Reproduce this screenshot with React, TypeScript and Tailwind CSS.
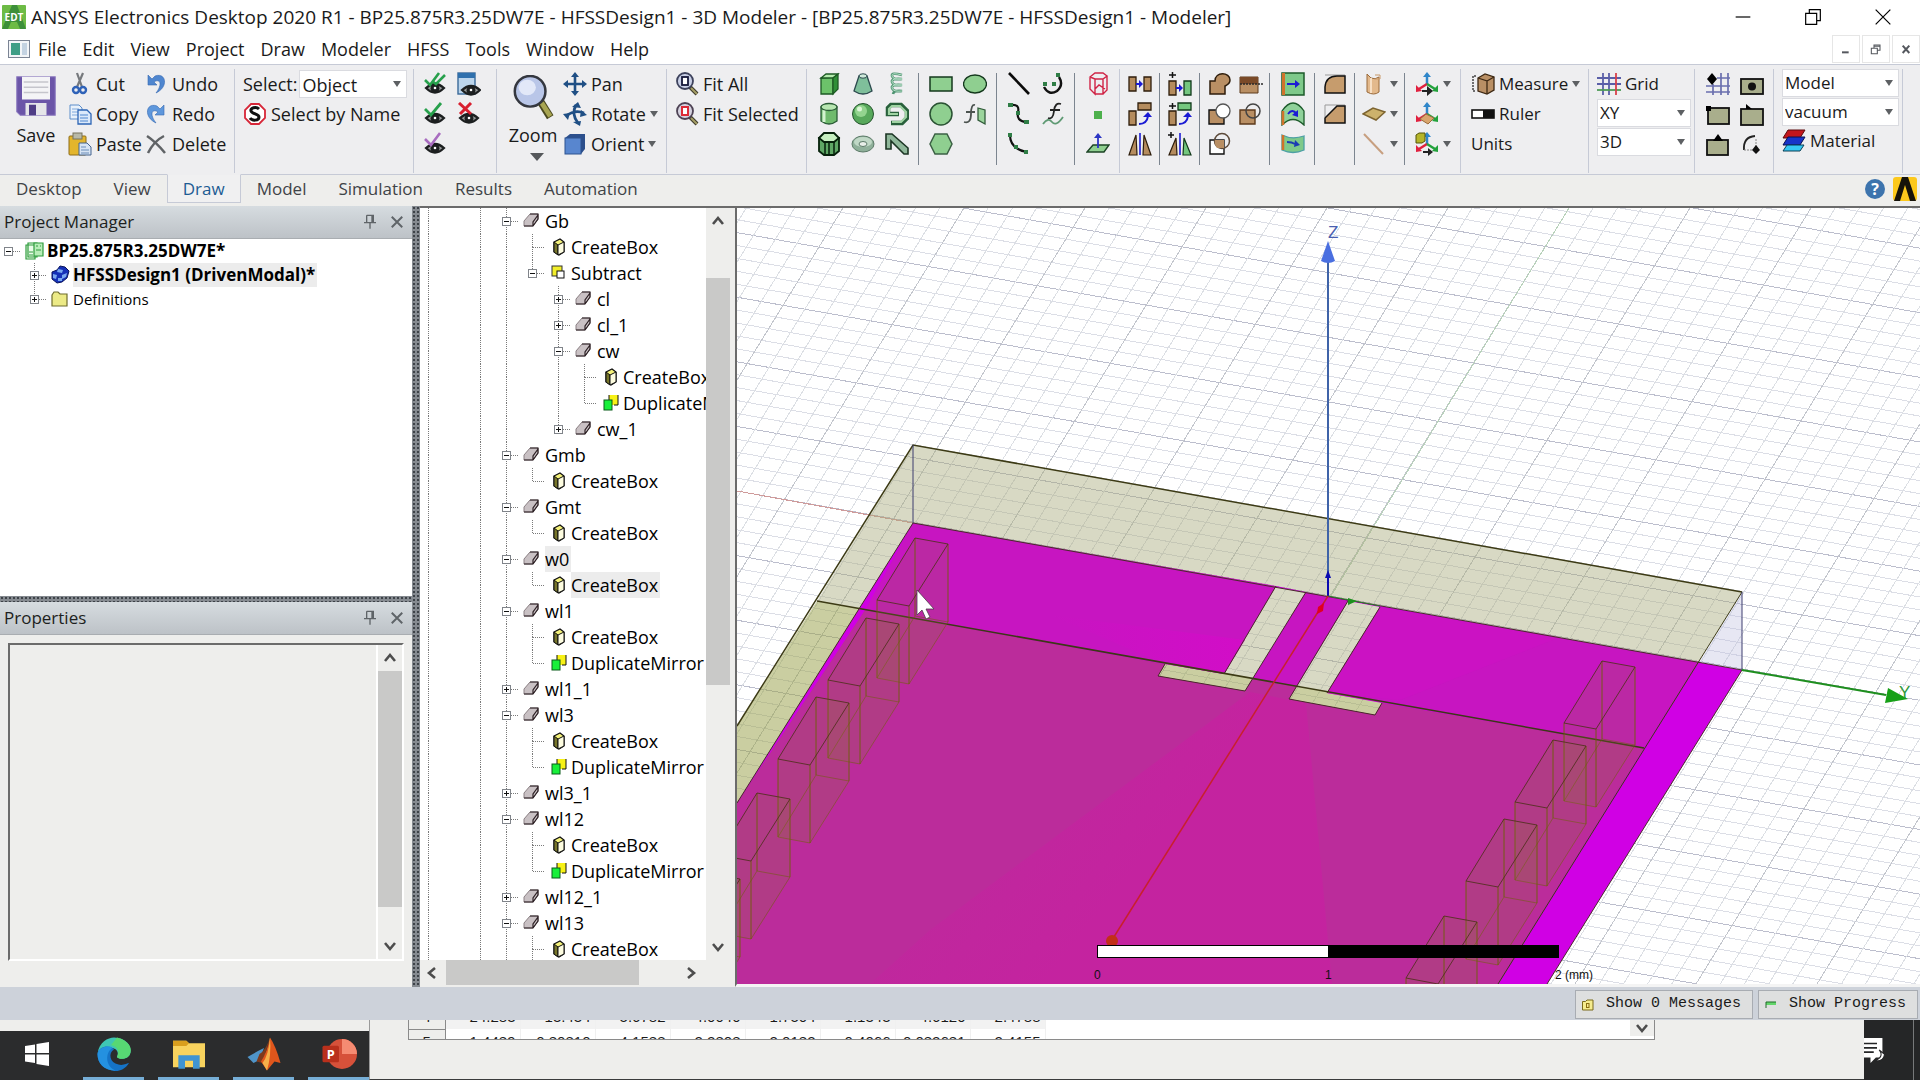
import type { ReactNode } from 'react';
import clsx from 'clsx';

/* ---------- icons ---------- */

function Svg({ children, className = 'size-6' }: { children: ReactNode; className?: string }) {
  return (
    <svg viewBox="0 0 24 24" className={clsx('shrink-0', className)} fill="none" aria-hidden="true">
      {children}
    </svg>
  );
}

const eye = (
  <>
    <path d="M3 16Q12 8 21 16Q12 25 3 16Z" fill="#9a9d9d" stroke="#1c1f20" strokeWidth="2.200" />
    <circle cx="12" cy="16.500" r="4.500" fill="#1c1f20" />
    <circle cx="12" cy="16" r="1.300" fill="#fff" />
  </>
);

const axes = (
  <>
    <path d="M12 13V3" stroke="#2f86c9" strokeWidth="2.500" />
    <path d="M8 5l4-5 4 5z" fill="#2f86c9" />
    <path d="M12 12L4 17" stroke="#e0203f" strokeWidth="2.500" />
    <path d="M1 13v7l6-1z" fill="#e0203f" />
    <path d="M12 12l8 5" stroke="#23a23c" strokeWidth="2.500" />
    <path d="M23 13v7l-6-1z" fill="#23a23c" />
  </>
);

const icons: Record<string, ReactNode> = {
  cut: (
    <>
      <path d="M9 1l5 14M15 1L9 15" stroke="#76797d" strokeWidth="2.200" />
      <circle cx="8" cy="18" r="3" stroke="#2f62b8" strokeWidth="2.400" />
      <circle cx="15" cy="18" r="3" stroke="#2f62b8" strokeWidth="2.400" />
    </>
  ),
  copy: (
    <>
      <path d="M2 3h9l3 3v11H2z" fill="#e8f1fb" stroke="#5c8ecb" />
      <path d="M4 7h7M4 10h7M4 13h7" stroke="#7fa8dc" />
      <path d="M10 8h9l4 4v10H10z" fill="#dbe9fa" stroke="#2e66b5" strokeWidth="1.300" />
      <path d="M12 13h8M12 16h8M12 19h8" stroke="#4f87cf" />
    </>
  ),
  paste: (
    <>
      <rect x="1" y="4" width="17" height="19" rx="1" fill="#e3b52c" stroke="#8d6d1a" />
      <rect x="5" y="1" width="9" height="6" fill="#b8b9a8" stroke="#77735c" />
      <path d="M11 11h8l4 4v8H11z" fill="#d7e4f3" stroke="#44648f" />
      <path d="M13 15h5M13 18h8M13 21h8" stroke="#6a8db9" />
    </>
  ),
  undo: <path d="M4 3v10h9l-3-3c6-4 9 2 2 11 13-6 10-21-1-17L8 7z" fill="#4f86cf" stroke="#3769b1" strokeWidth=".6" />,
  redo: <path d="M20 3v10h-9l3-3c-6-4-9 2-2 11C-1 15 2 0 13 4l3 3z" fill="#5e97dc" stroke="#3769b1" strokeWidth=".6" />,
  del: <path d="M3 4q9 6 18 17M20 4Q10 9 4 21" stroke="#606366" strokeWidth="2.500" />,
  stop: (
    <>
      <path d="M8 2h8l6 6v8l-6 6H8l-6-6V8z" fill="#fff" stroke="#d72638" strokeWidth="1.800" />
      <path d="M16 7c-3-3-9-1-8 2 1 3 8 3 8 6 0 4-7 4-9 1" stroke="#111" strokeWidth="3" />
    </>
  ),
  eyeAll: (
    <>
      {eye}
      <path d="M2 8l5 5L16 1M9 9l4 3 9-9" stroke="#27a04c" strokeWidth="2.600" />
    </>
  ),
  eyeOn: (
    <>
      {eye}
      <path d="M2 7l6 6L18 1" stroke="#27a04c" strokeWidth="2.800" />
    </>
  ),
  eyeSoft: (
    <>
      {eye}
      <path d="M2 7l6 6L17 1" stroke="#a86cc0" strokeWidth="2.600" />
    </>
  ),
  eyeWin: (
    <>
      <rect x="1" y="1" width="17" height="21" fill="#bcd5ec" stroke="#3b6a99" strokeWidth="1.400" />
      <path d="M1 3.500h17" stroke="#2f70ad" strokeWidth="5" />
      <g transform="translate(2 2)">{eye}</g>
    </>
  ),
  eyeOff: (
    <>
      {eye}
      <path d="M2 1l12 11M14 1L3 12" stroke="#d81f2f" strokeWidth="3" />
    </>
  ),
  pan: (
    <>
      <path d="M12 4v16M4 12h16" stroke="#1f4f85" strokeWidth="2.600" />
      <path d="M12 0l4 5H8zM12 24l4-5H8zM0 12l5-4v8zM24 12l-5-4v8z" fill="#1f4f85" />
    </>
  ),
  rotate: (
    <>
      <path d="M13 3Q8 12 15 21M3 14q9-7 18-3" stroke="#1f4f85" strokeWidth="2.800" />
      <path d="M9 5l6-5 3 6zM10 20l8-1-1 5zM0 12l7-1-2 7zM24 13l-6-5-1 7z" fill="#1f4f85" />
    </>
  ),
  orient: (
    <>
      <path d="M2 6l5-4h15v15l-4 5H2z" fill="#2c4f8c" />
      <rect x="2" y="6" width="16" height="16" fill="#5886cf" stroke="#2d528f" />
    </>
  ),
  fitAll: (
    <>
      <path d="M15 15l7 7" stroke="#3d3a2b" strokeWidth="4" />
      <path d="M16 16l6 6" stroke="#a59e66" strokeWidth="2" />
      <circle cx="10" cy="9" r="8" fill="#c9d0e6" stroke="#3d425c" strokeWidth="1.800" />
      <rect x="7" y="5" width="6" height="8" fill="#fff" stroke="#15183a" strokeWidth="1.800" />
    </>
  ),
  fitSel: (
    <>
      <path d="M15 15l7 7" stroke="#3d3a2b" strokeWidth="4" />
      <path d="M16 16l6 6" stroke="#a59e66" strokeWidth="2" />
      <circle cx="10" cy="9" r="8" fill="#d6d3e0" stroke="#4d4254" strokeWidth="1.800" />
      <rect x="7" y="5" width="6" height="8" fill="#fff" stroke="#dc2b38" strokeWidth="2" />
    </>
  ),
  box: (
    <>
      <path d="M4 6l12-1v17l-12 0z" fill="#6cc36a" stroke="#1d5a24" strokeWidth="1.300" />
      <path d="M4 6l5-4h12l-5 4z" fill="#b5ecae" stroke="#1d5a24" strokeWidth="1.300" />
      <path d="M16 6l5-4v15l-5 5z" fill="#2f8f37" stroke="#1d5a24" strokeWidth="1.300" />
    </>
  ),
  cone: (
    <>
      <path d="M8 4L3 19q9 6 18 0L16 4z" fill="#7fbf9b" stroke="#2c4a4e" strokeWidth="1.300" />
      <ellipse cx="12" cy="4" rx="4" ry="2.200" fill="#cfeadb" stroke="#2c4a4e" />
    </>
  ),
  helix: (
    <>
      <path d="M17 3Q6 0 7 4t10 3Q6 6 7 10t10 3Q6 12 7 16t10 3Q9 18 8 22" stroke="#4f9472" strokeWidth="2.600" />
      <path d="M17 3Q6 0 7 4t10 3Q6 6 7 10t10 3Q6 12 7 16t10 3" stroke="#b5dfc6" strokeWidth="1" />
    </>
  ),
  cyl: (
    <>
      <path d="M4 5v14q8 6 16 0V5z" fill="#6fba6d" stroke="#2a5c36" strokeWidth="1.300" />
      <path d="M7 8v12" stroke="#d2f3cf" strokeWidth="3" />
      <ellipse cx="12" cy="5" rx="8" ry="3.500" fill="#b7e6b1" stroke="#2a5c36" strokeWidth="1.300" />
    </>
  ),
  sphere: (
    <>
      <circle cx="12" cy="12" r="10.500" fill="#57a85b" stroke="#24532d" />
      <circle cx="10" cy="9" r="6" fill="#93d48f" />
      <circle cx="8.500" cy="7" r="2.500" fill="#ddf7d8" />
    </>
  ),
  spiral: (
    <>
      <path d="M14 12H3V6l3-3h10l6 6v7l-5 5H6" stroke="#28603b" strokeWidth="4.500" />
      <path d="M13 12H4V7l3-3h8l6 6v5l-5 5H7" stroke="#9fd3a3" strokeWidth="2.200" />
    </>
  ),
  prism: (
    <>
      <path d="M2 6v13l5 4h10l5-4V6z" fill="#5fa765" stroke="#06210b" strokeWidth="1.800" />
      <path d="M2 6l5-5h10l5 5-5 4H7z" fill="#c6efc0" stroke="#06210b" strokeWidth="1.800" />
      <path d="M8 10v13M12 10v13M17 10v13" stroke="#06210b" strokeWidth="1.500" />
    </>
  ),
  torus: (
    <>
      <ellipse cx="12" cy="12" rx="11" ry="8" fill="#8fb09a" stroke="#5c7a68" />
      <ellipse cx="12" cy="10" rx="9" ry="5" fill="#c0d8c6" />
      <ellipse cx="12" cy="12" rx="4" ry="2.500" fill="#e9efe9" stroke="#5c7a68" />
    </>
  ),
  sweep: <path d="M1 17V2h6l16 14v6h-4L6 9v8z" fill="#8fb79a" stroke="#1c3524" strokeWidth="1.600" />,
  rect: <rect x="1" y="5" width="22" height="14" fill="#8fcf90" stroke="#14381d" strokeWidth="1.500" />,
  ell: <ellipse cx="12" cy="12" rx="11.500" ry="9" fill="#8fcf90" stroke="#14381d" strokeWidth="1.300" />,
  circ: <circle cx="12" cy="12" r="11" fill="#8fcf90" stroke="#2a5233" strokeWidth="1.500" />,
  hex: <path d="M6 2h12l5 10-5 10H6L1 12z" fill="#8fcf90" stroke="#3c6145" strokeWidth="1.500" />,
  fsurf: (
    <>
      <path d="M12 3Q8 2 8 12t-7 8M3 10h9" stroke="#4c5350" strokeWidth="1.800" />
      <path d="M15 6l7 2v14l-7-4z" fill="#9bd49c" stroke="#315b3a" strokeWidth="1.300" />
    </>
  ),
  line: <path d="M2 1l20 21" stroke="#0a0a0a" strokeWidth="2.600" />,
  arc3: (
    <>
      <path d="M18 5q5 8-2 14Q8 24 3 15" stroke="#111" strokeWidth="2.400" />
      <path d="M15 1h4v4h-4zM2 10h4v4H2zM11 10h4v4h-4z" fill="#2f7d46" />
    </>
  ),
  spline: (
    <>
      <path d="M4 3q9-1 7 7-2 9 8 10" stroke="#111" strokeWidth="2.200" />
      <path d="M1 1h5v4H1zM9 9h4v4H9zM17 18h5v4h-5z" fill="#2f7d46" />
    </>
  ),
  eqcurve: (
    <>
      <path d="M20 2q-6-2-7 7t-6 7M9 8h10" stroke="#222" strokeWidth="1.800" />
      <path d="M2 22q5-7 9-2t11-5" stroke="#5f9a74" strokeWidth="1.800" />
    </>
  ),
  arc: (
    <>
      <path d="M3 3q0 14 17 17" stroke="#111" strokeWidth="2.200" />
      <path d="M1 1h4v4H1zM7 13h4v4H7zM17 18h4v4h-4z" fill="#2f7d46" />
    </>
  ),
  airbox: <path d="M4 5l5-4h8l4 3-4 3H9zM4 5v12l5 5V7M9 22h8V7M17 22l4-4V4M9 17l4-4 6 4" stroke="#d02446" strokeWidth="1.400" />,
  point: <rect x="8" y="9" width="8" height="8" fill="#4db04c" />,
  plane: (
    <>
      <path d="M1 20l6-7h16l-5 7z" fill="#8fcf90" stroke="#1c4425" strokeWidth="1.400" />
      <path d="M12 16V5" stroke="#2b35c4" strokeWidth="1.800" />
      <path d="M8 6l4-5 4 5z" fill="#2b35c4" />
    </>
  ),
  move: (
    <>
      <path d="M1 5h7v14H1zM16 5h7v14h-7z" fill="#b58c5e" stroke="#2e1d0b" strokeWidth="1.300" />
      <path d="M8 12h5" stroke="#1b1bd4" strokeWidth="2" />
      <path d="M11 8l4 4-4 4z" fill="#1b1bd4" />
    </>
  ),
  turn: (
    <>
      <path d="M1 9h7v14H1zM10 1h13v7H10z" fill="#b58c5e" stroke="#2e1d0b" strokeWidth="1.300" />
      <path d="M11 22q8 0 9-8" stroke="#1b1bd4" strokeWidth="2" />
      <path d="M15 15l5-5 4 5z" fill="#1b1bd4" />
    </>
  ),
  mirror: (
    <>
      <path d="M8 3L1 23h8zM16 3l7 20h-8z" fill="#b58c5e" stroke="#2e1d0b" strokeWidth="1.200" />
      <path d="M12 1v22" stroke="#1b1bd4" strokeWidth="1.600" />
    </>
  ),
  moveDup: (
    <>
      <path d="M1 9h7v14H1z" fill="#b58c5e" stroke="#2e1d0b" strokeWidth="1.300" />
      <path d="M16 9h7v14h-7z" fill="#74c77f" stroke="#123a1b" strokeWidth="1.300" />
      <path d="M1 3h7M4.500 0v6" stroke="#111" strokeWidth="1.500" />
      <path d="M8 16h5" stroke="#1b1bd4" strokeWidth="2" />
      <path d="M11 12l4 4-4 4z" fill="#1b1bd4" />
    </>
  ),
  turnDup: (
    <>
      <path d="M1 9h7v14H1z" fill="#b58c5e" stroke="#2e1d0b" strokeWidth="1.300" />
      <path d="M10 1h13v7H10z" fill="#74c77f" stroke="#123a1b" strokeWidth="1.300" />
      <path d="M1 4h7M4.500 1v6" stroke="#111" strokeWidth="1.500" />
      <path d="M11 22q8 0 9-8" stroke="#1b1bd4" strokeWidth="2" />
      <path d="M15 15l5-5 4 5z" fill="#1b1bd4" />
    </>
  ),
  mirrorDup: (
    <>
      <path d="M8 6L1 23h8z" fill="#b58c5e" stroke="#2e1d0b" strokeWidth="1.200" />
      <path d="M16 6l7 17h-8z" fill="#74c77f" stroke="#123a1b" strokeWidth="1.200" />
      <path d="M0 3h6M3 0v6" stroke="#111" strokeWidth="1.500" />
      <path d="M12 1v22" stroke="#1b1bd4" strokeWidth="1.600" />
    </>
  ),
  unite: <path d="M2 9h5c0-10 15-9 15-1 0 4-3 5-5 6v8H2z" fill="#b98f64" stroke="#2e1d0b" strokeWidth="1.500" />,
  split: (
    <>
      <path d="M1 5h18v16H1z" fill="#b98f64" stroke="#5c3a1c" />
      <path d="M1 5h18v7H1z" fill="#7a4a28" />
      <path d="M1 12h23" stroke="#2a2a2a" strokeWidth="1.500" strokeDasharray="2 1" />
    </>
  ),
  subtract: (
    <>
      <path d="M1 8h15v14H1z" fill="#b98f64" stroke="#111" strokeWidth="1.400" />
      <circle cx="15" cy="9" r="7" fill="#fff" stroke="#555" strokeWidth="1.300" />
    </>
  ),
  imprint: (
    <>
      <path d="M1 8h15v14H1z" fill="#b98f64" stroke="#5c3a1c" strokeWidth="1.400" />
      <circle cx="14" cy="9" r="7" stroke="#444" strokeWidth="1.500" />
    </>
  ),
  intersect: (
    <>
      <path d="M2 8h14v14H2z" fill="#fff" stroke="#111" strokeWidth="1.400" />
      <circle cx="14" cy="9" r="7.500" stroke="#5c4a3a" strokeWidth="1.500" />
      <path d="M7 8h9v8H9q-3-4-2-8z" fill="#b98f64" />
    </>
  ),
  sweepV: (
    <>
      <rect x="1" y="1" width="22" height="22" fill="#7ec98a" stroke="#1c5a2a" strokeWidth="1.500" />
      <path d="M2.500 1v22" stroke="#d0722a" strokeWidth="3" />
      <path d="M6 12h10" stroke="#1b1bd4" strokeWidth="2" />
      <path d="M14 8l5 4-5 4z" fill="#1b1bd4" />
    </>
  ),
  sweepA: (
    <>
      <path d="M1 23V9Q12-7 23 9v14Q12 12 1 23z" fill="#8fd19a" stroke="#1c5a2a" strokeWidth="1.300" />
      <path d="M2 23V9" stroke="#d0722a" strokeWidth="2.500" />
      <path d="M7 12q4-6 9 0" stroke="#1b1bd4" strokeWidth="1.800" />
      <path d="M17 8v7l-6-2z" fill="#1b1bd4" />
    </>
  ),
  sweepP: (
    <>
      <path d="M1 3q10 5 22 1v14q-11 5-22 0z" fill="#7ec98a" stroke="#4d9fa5" strokeWidth="1.300" />
      <path d="M2 3v15" stroke="#d0722a" strokeWidth="2.500" />
      <path d="M6 10q5 0 8 2" stroke="#1b3bb4" strokeWidth="1.800" />
      <path d="M14 8l5 5-6 2z" fill="#1b3bb4" />
    </>
  ),
  fillet: (
    <>
      <path d="M2 3h20" stroke="#999" />
      <path d="M2 21V15Q3 4 14 4h8v17z" fill="#c69c6d" stroke="#111" strokeWidth="1.500" />
    </>
  ),
  chamfer: (
    <>
      <path d="M2 3h20M2 3v12" stroke="#999" />
      <path d="M2 21v-5L14 4h8v17z" fill="#c69c6d" stroke="#111" strokeWidth="1.500" />
    </>
  ),
  sheetCyl: (
    <>
      <path d="M5 2v18q7 4 12 0V5q-4 3-8 1z" fill="#e3b98c" stroke="#9a6a3b" />
      <path d="M9 6v15" stroke="#f7dfc4" strokeWidth="2" />
      <path d="M13 3h5v4h-5" stroke="#c99a6b" />
    </>
  ),
  sheet: <path d="M1 12l10-6 12 4-9 8z" fill="#cdb26c" stroke="#7d6430" strokeWidth="1.500" />,
  edge: <path d="M2 2l19 20" stroke="#c79f80" strokeWidth="2" />,
  cs: (
    <>
      {axes}
      <path d="M7 18h5v-4l6 5-6 5v-4H7z" fill="#222" />
    </>
  ),
  csFace: (
    <>
      {axes}
      <path d="M5 17l6-5 8 4-6 6z" fill="#d9a56d" stroke="#9a6a3b" />
    </>
  ),
  csObj: (
    <>
      {axes}
      <path d="M1 3l3-2h6v8l-3 2H1z" fill="#b5b52a" stroke="#55550a" />
      <path d="M8 19h5v-3l5 4-5 4v-3H8z" fill="#222" />
    </>
  ),
  measure: (
    <>
      <path d="M7 6l7-4 9 3v13l-7 4-9-3z" fill="#b98f64" stroke="#3d2813" strokeWidth="1.300" />
      <path d="M7 6l9 3v13M16 9l7-4" stroke="#3d2813" strokeWidth="1.300" />
      <path d="M5 4H2v15h3" stroke="#444" strokeWidth="1.500" strokeDasharray="2 1" />
    </>
  ),
  ruler: (
    <>
      <rect x="1" y="8" width="22" height="8" fill="#fff" stroke="#111" strokeWidth="1.600" />
      <path d="M12 8h11v8H12z" fill="#111" />
    </>
  ),
  grid: (
    <>
      <path d="M6 1v22M12 1v22M0 6h24M0 12h24" stroke="#5a5fa8" strokeWidth="1.800" />
      <path d="M0 18h24" stroke="#4d9b57" strokeWidth="1.800" />
      <path d="M19 1v22" stroke="#d8404a" strokeWidth="1.800" />
    </>
  ),
  snapGrid: (
    <>
      <path d="M7 12v11M15 1v22M22 1v22M11 6h13M0 14h24M0 20h24" stroke="#6a6fae" strokeWidth="1.700" />
      <path d="M6 1l5 6-5 6-5-6z" fill="#000" />
    </>
  ),
  snapVertex: (
    <>
      <rect x="2" y="6" width="21" height="16" fill="#a9ae8c" stroke="#111" strokeWidth="1.800" />
      <rect x="0" y="4" width="5" height="5" fill="#000" />
    </>
  ),
  snapEdge: (
    <>
      <rect x="1" y="8" width="21" height="15" fill="#a9ae8c" stroke="#111" strokeWidth="1.800" />
      <path d="M12 2l5 7H7z" fill="#000" />
    </>
  ),
  snapFace: (
    <>
      <rect x="1" y="7" width="22" height="15" fill="#a9ae8c" stroke="#111" strokeWidth="1.800" />
      <circle cx="12" cy="14.500" r="4" fill="#111" />
    </>
  ),
  snapMid: (
    <>
      <rect x="1" y="7" width="22" height="16" fill="#a9ae8c" stroke="#111" strokeWidth="1.800" />
      <path d="M6 2l6 5H6z" fill="#000" />
    </>
  ),
  snapArc: (
    <>
      <path d="M4 18Q3 5 15 4" stroke="#222" strokeWidth="1.800" />
      <path d="M4 18h12V6" stroke="#888" strokeDasharray="2 1" />
      <path d="M16 13l4 5-4 4-4-4z" fill="#111" />
    </>
  ),
  material: (
    <>
      <path d="M6 1h17l-5 8H1z" fill="#c4161c" stroke="#5c0a0c" />
      <path d="M6 8h17l-5 8H1z" fill="#1734c9" stroke="#08104f" />
      <path d="M5 16h17l-4 6H1z" fill="#36c8f4" stroke="#0a3f55" />
    </>
  ),
};

function Icon({ name, className }: { name: string; className?: string }) {
  return <Svg className={className}>{icons[name]}</Svg>;
}

function Caret() {
  return (
    <svg viewBox="0 0 8 6" className="h-[6px] w-2 shrink-0" aria-hidden="true">
      <path d="M0 0h8L4 6z" fill="#5d6063" />
    </svg>
  );
}

/* ---------- ribbon ---------- */

function Group({ className, dark, children }: { className: string; dark?: boolean; children?: ReactNode }) {
  return (
    <div className={clsx('relative flex h-[104px] shrink-0 items-start', className)}>
      {children}
      <span
        className={clsx('absolute right-0 w-px', dark ? 'top-1 bottom-2 bg-[#7c8590]' : 'inset-y-0 bg-[#c6cad6]')}
      />
    </div>
  );
}

function Tool({ icon, label, caret }: { icon: string; label: string; caret?: boolean }) {
  return (
    <button className="flex h-[30px] items-center gap-1 whitespace-nowrap">
      <Icon name={icon} />
      <span>{label}</span>
      {caret && <Caret />}
    </button>
  );
}

function IconGrid({ cols, cell = 'w-[34px]', caret }: { cols: string[][]; cell?: string; caret?: boolean[] }) {
  return (
    <div className="flex">
      {cols.map((col, i) => (
        <div key={i} className="flex flex-col">
          {col.map((name, j) => (
            <button key={name} aria-label={name} className={clsx('flex h-[30px] items-center justify-center gap-1', cell)}>
              <Icon name={name} />
              {caret && (caret[j] ? <Caret /> : <span className="w-2" />)}
            </button>
          ))}
        </div>
      ))}
    </div>
  );
}

function Combo({ label, value, options, className }: { label: string; value: string; options: string[]; className: string }) {
  return (
    <div className={clsx('relative flex h-7 items-center border border-[#dadbe0] bg-white', className)}>
      <select aria-label={label} defaultValue={value} className="size-full appearance-none bg-transparent pl-0.5">
        {options.map((o) => (
          <option key={o}>{o}</option>
        ))}
      </select>
      <span className="pointer-events-none absolute right-[5px] flex">
        <Caret />
      </span>
    </div>
  );
}

function Ribbon() {
  return (
    <div className="flex h-[111px] shrink-0 overflow-hidden border-y border-[#c6cad6] bg-[#eeeef0] pt-1 text-lg">
      <Group className="w-[235px] pl-3.5">
        <button className="flex w-11 flex-col items-center gap-2 pt-1.5">
          <Svg className="size-[42px]">
            <path d="M1 1h22v22H3l-2-2z" fill="#6b55a8" stroke="#8d7cc0" strokeWidth=".6" />
            <path d="M4 1h16v13H4z" fill="#f4f4f6" />
            <path d="M5 4h14M5 7h14M5 10h14" stroke="#c5c5cc" strokeWidth=".8" />
            <path d="M6 16h12v7H6z" fill="#e5e5e9" />
            <path d="M8 17h4v6H8z" fill="#4f3d86" />
          </Svg>
          <span className="leading-5">Save</span>
        </button>
        <div className="ml-2.5 flex w-[76px] flex-col">
          <Tool icon="cut" label="Cut" />
          <Tool icon="copy" label="Copy" />
          <Tool icon="paste" label="Paste" />
        </div>
        <div className="flex flex-col">
          <Tool icon="undo" label="Undo" />
          <Tool icon="redo" label="Redo" />
          <Tool icon="del" label="Delete" />
        </div>
      </Group>

      <Group className="w-[179px] flex-col pl-2">
        <div className="flex h-[30px] items-center gap-0.5">
          <span>Select:</span>
          <Combo label="Select" value="Object" options={['Object', 'Face', 'Edge', 'Vertex']} className="w-[108px]" />
        </div>
        <Tool icon="stop" label="Select by Name" />
      </Group>

      <Group className="w-[83px] pl-1">
        <IconGrid cols={[['eyeAll', 'eyeOn', 'eyeSoft'], ['eyeWin', 'eyeOff']]} />
      </Group>

      <Group className="w-[170px] pl-2.5">
        <button className="flex w-[52px] flex-col items-center pt-1.5">
          <Svg className="size-[46px]">
            <path d="M16 14l5 8" stroke="#4a481f" strokeWidth="4" />
            <path d="M16.500 14.500l4.500 7" stroke="#a8a552" strokeWidth="2.500" />
            <ellipse cx="10.500" cy="8.500" rx="8" ry="8" fill="#b9c6e8" stroke="#34373f" strokeWidth="1.300" />
            <ellipse cx="9" cy="6.500" rx="4.500" ry="4" fill="#e2e8f8" />
          </Svg>
          <span className="mt-1 leading-5">Zoom</span>
          <svg viewBox="0 0 14 8" className="mt-2 ml-2 h-2 w-3.5" aria-hidden="true">
            <path d="M0 0h14L7 8z" fill="#55585b" />
          </svg>
        </button>
        <div className="ml-1 flex flex-col">
          <Tool icon="pan" label="Pan" />
          <Tool icon="rotate" label="Rotate" caret />
          <Tool icon="orient" label="Orient" caret />
        </div>
      </Group>

      <Group className="w-[140px] flex-col pl-2">
        <Tool icon="fitAll" label="Fit All" />
        <Tool icon="fitSel" label="Fit Selected" />
      </Group>

      <Group dark className="w-28 justify-center">
        <IconGrid cols={[['box', 'cyl', 'prism'], ['cone', 'sphere', 'torus'], ['helix', 'spiral', 'sweep']]} />
      </Group>
      <Group dark className="w-[78px] justify-center">
        <IconGrid cols={[['rect', 'circ', 'hex'], ['ell', 'fsurf']]} />
      </Group>
      <Group dark className="w-[78px] justify-center">
        <IconGrid cols={[['line', 'spline', 'arc'], ['arc3', 'eqcurve']]} />
      </Group>
      <Group className="w-[45px] justify-center">
        <IconGrid cols={[['airbox', 'point', 'plane']]} />
      </Group>
      <Group dark className="w-10 justify-center">
        <IconGrid cols={[['move', 'turn', 'mirror']]} />
      </Group>
      <Group dark className="w-10 justify-center">
        <IconGrid cols={[['moveDup', 'turnDup', 'mirrorDup']]} />
      </Group>
      <Group dark className="w-[70px] justify-center">
        <IconGrid cell="w-[31px]" cols={[['unite', 'subtract', 'intersect'], ['split', 'imprint']]} />
      </Group>
      <Group dark className="w-[45px] justify-center">
        <IconGrid cols={[['sweepV', 'sweepA', 'sweepP']]} />
      </Group>
      <Group dark className="w-10 justify-center">
        <IconGrid cols={[['fillet', 'chamfer']]} />
      </Group>
      <Group dark className="w-[50px] justify-center">
        <IconGrid cell="w-10" caret={[true, true, true]} cols={[['sheetCyl', 'sheet', 'edge']]} />
      </Group>
      <Group className="w-14 justify-center">
        <IconGrid cell="w-12" caret={[true, false, true]} cols={[['cs', 'csFace', 'csObj']]} />
      </Group>

      <Group className="w-32 flex-col pl-2.5 text-[17px]">
        <Tool icon="measure" label="Measure" caret />
        <Tool icon="ruler" label="Ruler" />
        <button className="h-[30px]">Units</button>
      </Group>
      <Group className="w-[106px] flex-col pl-2 text-[17px]">
        <Tool icon="grid" label="Grid" />
        <Combo label="Plane" value="XY" options={['XY', 'YZ', 'XZ']} className="w-[94px]" />
        <Combo label="Mode" value="3D" options={['3D', 'In plane']} className="mt-px w-[94px]" />
      </Group>
      <Group className="w-[79px] justify-center">
        <IconGrid cols={[['snapGrid', 'snapVertex', 'snapEdge'], ['snapFace', 'snapMid', 'snapArc']]} />
      </Group>
      <Group className="w-[129px] flex-col pl-2 text-[17px]">
        <Combo label="Object type" value="Model" options={['Model', 'Non Model']} className="w-[117px]" />
        <Combo label="Material name" value="vacuum" options={['vacuum', 'copper']} className="mt-px w-[117px]" />
        <Tool icon="material" label="Material" />
      </Group>
    </div>
  );
}

/* ---------- trees ---------- */

type Row = { g: string; icon: keyof typeof treeIcons; label: string; sel?: boolean; bold?: boolean };

const treeIcons = {
  solid: (
    <>
      <path d="M4 17v-5l6-7h8v5l-5 7z" fill="#c9c1c4" stroke="#8b8084" />
      <path d="M4 17h9l5-7V5h-8M13 17v-4l5-7" stroke="#2c2024" strokeWidth="1.200" />
    </>
  ),
  cube: (
    <>
      <path d="M8 7l6-3 4 3v10l-5 3-5-3z" fill="#f5f27a" stroke="#111" strokeWidth="1.300" />
      <path d="M8 7l4 3v10l-4-3z" fill="#77752a" stroke="#111" />
      <path d="M12 10l6-3v10l-6 3z" fill="#fdfce0" stroke="#111" />
    </>
  ),
  sub: (
    <>
      <rect x="6" y="5" width="10" height="10" fill="#f2ee2a" stroke="#333" />
      <rect x="11" y="10" width="7" height="7" fill="#fff" stroke="#111" />
    </>
  ),
  dup: (
    <>
      <rect x="11" y="4" width="9" height="10" fill="#f7f116" />
      <path d="M20 4v10h-4M11 9V4" stroke="#111" />
      <rect x="6" y="9" width="8" height="10" fill="#17f03a" stroke="#0b5a1a" />
    </>
  ),
  project: (
    <>
      <path d="M4 6h9v14H4zM6 4h9v14H6z" fill="#eafbe9" stroke="#2e9c3d" strokeWidth="1.200" />
      <path d="M12 4h9v13h-9z" fill="#b8edb8" stroke="#2e9c3d" strokeWidth="1.200" />
      <path d="M14 7h2M18 7h1M14 11h5M7 13h4M7 16h4" stroke="#2e9c3d" />
    </>
  ),
  design: (
    <>
      <path d="M4 9l5-2 3-4 5 1 4 4-2 7-5 4-5 1-5-4z" fill="#1530b8" stroke="#0a155c" />
      <path d="M10 6l5 1-1 3-5-1zM5 11l4 1-1 4-3-1zM14 12l5-2-1 4-4 2zM10 15h4v3h-4z" fill="#79a8f0" />
    </>
  ),
  folder: <path d="M4 8l2-3h4l2 2h7v12H4z" fill="#ecea86" stroke="#6f6d2e" strokeWidth="1.200" />,
};

// one guide column: | line, T branch, L last branch, -/+ node, m/p node without line below, n root node
function Guide({ kind, h }: { kind: string; h: number }) {
  const mid = h / 2;
  const node = '-+mpn'.includes(kind);
  const up = '|TL-+mp'.includes(kind);
  const down = '|T-+'.includes(kind);
  return (
    <svg width="26" height={h} className="shrink-0" fill="none" aria-hidden="true">
      <g stroke="#7a7a7a" strokeDasharray="1 1" shapeRendering="crispEdges">
        {up && <path d={`M13.500 0V${mid}`} />}
        {down && <path d={`M13.500 ${mid}V${h}`} />}
        {kind !== '|' && kind !== ' ' && <path d={`M14 ${mid + 0.5}H26`} />}
      </g>
      {node && (
        <g shapeRendering="crispEdges">
          <rect x="9.500" y={mid - 3.5} width="8" height="8" fill="#fff" stroke="#80848a" />
          <path d={`M11 ${mid + 0.5}h5`} stroke="#111" />
          {'+p'.includes(kind) && <path d={`M13.500 ${mid - 2}v5`} stroke="#111" />}
        </g>
      )}
    </svg>
  );
}

function Tree({ rows, h, className }: { rows: Row[]; h: number; className: string }) {
  return (
    <ul className="-ml-[5px]">
      {rows.map((r, i) => (
        <li key={i} className={clsx('flex items-center whitespace-nowrap', className)}>
          {r.g.split('').map((k, j) => (
            <Guide key={j} kind={k} h={h} />
          ))}
          <span className="flex w-[26px] shrink-0 justify-center">
            <Svg>{treeIcons[r.icon]}</Svg>
          </span>
          <span
            className={clsx('flex h-full items-center pr-0.5', r.sel && 'bg-[#ececec]', r.bold && 'text-[17px] font-bold')}
          >
            {r.label}
          </span>
        </li>
      ))}
    </ul>
  );
}

const projectRows: Row[] = [
  { g: 'n', icon: 'project', label: 'BP25.875R3.25DW7E*', bold: true },
  { g: ' +', icon: 'design', label: 'HFSSDesign1 (DrivenModal)*', sel: true, bold: true },
  { g: ' p', icon: 'folder', label: 'Definitions' },
];

const modelRows: Row[] = [
  { g: '| |-', icon: 'solid', label: 'Gb' },
  { g: '| ||T', icon: 'cube', label: 'CreateBox' },
  { g: '| ||m', icon: 'sub', label: 'Subtract' },
  { g: '| || +', icon: 'solid', label: 'cl' },
  { g: '| || +', icon: 'solid', label: 'cl_1' },
  { g: '| || -', icon: 'solid', label: 'cw' },
  { g: '| || |T', icon: 'cube', label: 'CreateBox' },
  { g: '| || |L', icon: 'dup', label: 'DuplicateMirror' },
  { g: '| || p', icon: 'solid', label: 'cw_1' },
  { g: '| |-', icon: 'solid', label: 'Gmb' },
  { g: '| ||L', icon: 'cube', label: 'CreateBox' },
  { g: '| |-', icon: 'solid', label: 'Gmt' },
  { g: '| ||L', icon: 'cube', label: 'CreateBox' },
  { g: '| |-', icon: 'solid', label: 'w0', sel: true },
  { g: '| ||L', icon: 'cube', label: 'CreateBox', sel: true },
  { g: '| |-', icon: 'solid', label: 'wl1' },
  { g: '| ||T', icon: 'cube', label: 'CreateBox' },
  { g: '| ||L', icon: 'dup', label: 'DuplicateMirror' },
  { g: '| |+', icon: 'solid', label: 'wl1_1' },
  { g: '| |-', icon: 'solid', label: 'wl3' },
  { g: '| ||T', icon: 'cube', label: 'CreateBox' },
  { g: '| ||L', icon: 'dup', label: 'DuplicateMirror' },
  { g: '| |+', icon: 'solid', label: 'wl3_1' },
  { g: '| |-', icon: 'solid', label: 'wl12' },
  { g: '| ||T', icon: 'cube', label: 'CreateBox' },
  { g: '| ||L', icon: 'dup', label: 'DuplicateMirror' },
  { g: '| |+', icon: 'solid', label: 'wl12_1' },
  { g: '| |-', icon: 'solid', label: 'wl13' },
  { g: '| ||T', icon: 'cube', label: 'CreateBox' },
];

function Chevron({ dir, className = 'h-[26px]' }: { dir: 'up' | 'down' | 'left' | 'right'; className?: string }) {
  const d = { up: 'M7 15l5-6 5 6', down: 'M7 9l5 6 5-6', left: 'M15 7l-6 5 6 5', right: 'M9 7l6 5-6 5' }[dir];
  return (
    <button aria-label={`Scroll ${dir}`} className={clsx('flex w-6 shrink-0 items-center justify-center', className)}>
      <Svg>
        <path d={d} stroke="#4d4d4d" strokeWidth="2.600" />
      </Svg>
    </button>
  );
}

function PanelHeader({ title }: { title: string }) {
  return (
    <div className="flex h-[33px] shrink-0 items-center border-b border-[#a9adb1] bg-linear-to-b from-[#d6dce0] to-[#bdc2c7] pr-1.5 pl-1 text-[17px] text-[#1d1f21]">
      <h2 className="flex-1">{title}</h2>
      <button aria-label={`Pin ${title}`} className="mr-2.5">
        <Svg className="size-4">
          <path d="M7 2h10v11M7 2v11M15 2v11M3 13h18M12 13v9" stroke="#5f6468" strokeWidth="2" />
        </Svg>
      </button>
      <button aria-label={`Close ${title}`}>
        <Svg className="size-[18px]">
          <path d="M5 5l14 14M19 5L5 19" stroke="#5f6468" strokeWidth="2.600" />
        </Svg>
      </button>
    </div>
  );
}

const hatch = 'bg-[#858a90] bg-[radial-gradient(#3d4248_1px,transparent_1px)] bg-[size:4px_4px]';

/* ---------- 3D viewport ---------- */

const seq = (from: number, to: number) => Array.from({ length: to - from + 1 }, (_, i) => from + i);

const vias = [
  [915, 538], [866, 618], [816, 697], [757, 793], [707, 873],
  [1602, 661], [1553, 740], [1504, 819], [1444, 916],
];

function Via({ x, y }: { x: number; y: number }) {
  const a = [x, y], b = [x + 33, y + 6], c = [x - 6, y + 68], d = [x - 38, y + 62];
  const low = (p: number[]) => `${p[0]} ${p[1] + 78}`;
  return (
    <g>
      <path d={`M${a}L${b}L${low(b)}L${low(c)}L${low(d)}L${d}Z`} fill="#8a7a30" fillOpacity=".2" />
      <g stroke="#6b6000" strokeOpacity=".85">
        <path d={`M${low(a)}L${low(b)}L${low(c)}L${low(d)}Z`} strokeOpacity=".5" />
        <path d={`M${a}L${low(a)}M${b}L${low(b)}M${c}L${low(c)}M${d}L${low(d)}`} />
        <path d={`M${a}L${b}L${c}L${d}Z`} stroke="#50301c" />
      </g>
    </g>
  );
}

function Viewport() {
  return (
    <svg
      viewBox="737 208 1183 776"
      preserveAspectRatio="xMinYMin slice"
      className="size-full bg-white"
      fill="none"
      role="img"
      aria-label="HFSS model"
      fontFamily="Liberation Sans, Arial, sans-serif"
    >
      <defs>
        <linearGradient id="glow" x1="0" y1="0" x2="1" y2=".5">
          <stop offset="0" stopColor="#c522a0" stopOpacity="0" />
          <stop offset=".3" stopColor="#c522a0" stopOpacity=".25" />
          <stop offset=".7" stopColor="#c522a0" stopOpacity=".9" />
        </linearGradient>
        <linearGradient id="glowTop" x1="0" y1="0" x2="1" y2="0">
          <stop offset="0" stopColor="#d30cc8" stopOpacity="0" />
          <stop offset="1" stopColor="#d30cc8" stopOpacity=".9" />
        </linearGradient>
      </defs>

      {/* reference grid */}
      <g shapeRendering="crispEdges">
        {seq(-40, 42).map((k) => {
          const y = 491 + k * 12.92;
          return <path key={k} d={`M737 ${y}L1920 ${y + 209.4}`} stroke={k % 5 === 0 ? '#bcbecd' : '#dcdee6'} />;
        })}
        {seq(-36, 36).map((k) => {
          const x = 1569 + k * 24.2;
          return <path key={k} d={`M${x} 208L${x - 478} 984`} stroke={k % 5 === 0 ? '#c3c6cd' : '#dcdfe4'} />;
        })}
        <path d="M737 491L913 523" stroke="#cf9a9a" />
        <path d="M1569 208L1331 596" stroke="#b9d2bb" />
      </g>

      {/* substrate, upper and lower part */}
      <path d="M913 445L1742 592L1644 748L817 601Z" fill="#a9ab7c" fillOpacity=".45" />
      <path d="M817 601L1644 748L1498 984H737V726Z" fill="#9aa24a" fillOpacity=".52" />
      <path d="M1742 592V670L1699 662Z" fill="#b9b9dc" fillOpacity=".35" />

      {/* ground plane */}
      <path
        fillRule="evenodd"
        d="M913 523L1742 670L1547 984H737V803ZM1276 586L1224 674L1165 664L1158 676L1245 691L1253 678L1306 592ZM1348 601L1297 686L1289 699L1375 715L1382 703L1327 693L1380 607Z"
        fill="#d000e4"
      />
      <path d="M913 523L1276 586L1224 674L865 610Z" fill="#c715c1" />
      <path d="M1306 592L1348 601L1297 686L1254 678Z" fill="#c715c1" />
      <path d="M1380 607L1699 662L1644 748L1327 693Z" fill="#c715c1" />
      <path d="M1050 615L1245 640L1224 674L1165 664Z" fill="url(#glowTop)" />
      <path d="M1380 607L1560 637L1400 700L1327 693Z" fill="#cf0fc5" fillOpacity=".5" />
      <path
        d="M865 610L1165 664L1158 676L1245 691L1253 678L1297 686L1289 699L1375 715L1382 703L1644 748L1498 984H737V803Z"
        fill="#bb2c9b"
      />
      <path d="M1250 692L1306 703L1332 984H870L930 930Z" fill="url(#glow)" />

      {/* edges */}
      <g stroke="#4a2a2a">
        <path d="M1276 586L1224 674M1306 592L1245 691L1158 676L1165 664M1348 601L1289 699L1375 715L1382 703M1380 607L1327 693" />
        <path d="M913 523L1742 670L1547 984M913 523L737 803" />
        <path d="M1742 592L1498 984" stroke="#3c3a14" />
      </g>
      <path d="M737 726L913 445L1742 592M817 601L1644 748" stroke="#3c3a14" strokeWidth="1.500" />
      <path d="M913 445V523M1742 592V670" stroke="#3d3d6e" />

      {vias.map(([x, y]) => (
        <Via key={`${x}-${y}`} x={x} y={y} />
      ))}

      {/* axes */}
      <path d="M1328 596V262" stroke="#3f63a8" strokeWidth="2" />
      <path d="M1328 241L1335 261Q1328 265 1321 261Z" fill="#4a6fe0" />
      <path d="M1328 596V574" stroke="#0b0bb0" strokeWidth="2" />
      <path d="M1328 570l3 8h-6z" fill="#0b0bb0" />
      <path d="M1328 596L1380 606" stroke="#2d7a2d" strokeWidth="1" />
      <path d="M1742 670L1886 695" stroke="#1e8f1e" strokeWidth="2" />
      <path d="M1348 598l9 3-9 4z" fill="#1e8f1e" />
      <path d="M1888 688L1908 699L1885 703Z" fill="#17a017" />
      <path d="M1328 596L1112 940" stroke="#c8202c" strokeWidth="1.500" />
      <path d="M1324 603l-1 8-6 3 1-7z" fill="#e00020" />
      <circle cx="1112" cy="941" r="6" fill="#c23018" />
      <text x="1328" y="238" fontSize="17" fill="#4a5fb0">Z</text>
      <text x="1899" y="698" fontSize="17" fill="#2f9a3a">Y</text>

      {/* scale */}
      <rect x="1097" y="945" width="462" height="13" fill="#000" />
      <rect x="1098" y="946" width="230" height="11" fill="#fff" />
      <g fontSize="12" fill="#111">
        <text x="1094" y="979">0</text>
        <text x="1325" y="979">1</text>
        <text x="1555" y="979">2 (mm)</text>
      </g>

      {/* pointer */}
      <path d="M917 590V615L922 610L926 619L930 617L926 609H934Z" fill="#fff" stroke="#4d3a4a" strokeWidth=".8" />
    </svg>
  );
}

/* ---------- window chrome ---------- */

const menus = ['File', 'Edit', 'View', 'Project', 'Draw', 'Modeler', 'HFSS', 'Tools', 'Window', 'Help'];
const tabs = ['Desktop', 'View', 'Draw', 'Model', 'Simulation', 'Results', 'Automation'];
const results = [
  ['4', '24.283', '13.434', '5.6782', '4.0040', '1.7504', '1.1343', '4.6120', '2.4788'],
  ['5', '1.4489', '0.80810', '4.1588', '2.2808', '2.0182', '0.4066', '0.082681', '2.4155'],
];

function TitleBar() {
  return (
    <header className="flex h-[33px] shrink-0 items-center bg-white pr-0.5 pl-0.5 text-[19px]">
      <svg viewBox="0 0 24 24" className="size-6 shrink-0" aria-hidden="true">
        <rect width="24" height="24" rx="1" fill="#6dbb45" />
        <path d="M0 24L10 0h5l9 24h-6l-3-7H9l-3 7z" fill="#3d8f3a" />
        <text x="12" y="16" textAnchor="middle" fontSize="10" fontWeight="700" fill="#fff" fontFamily="Open Sans, sans-serif">
          EDT
        </text>
      </svg>
      <h1 className="flex-1 truncate pl-[5px] leading-7">
        ANSYS Electronics Desktop 2020 R1 - BP25.875R3.25DW7E - HFSSDesign1 - 3D Modeler - [BP25.875R3.25DW7E - HFSSDesign1 - Modeler]
      </h1>
      <div className="flex text-black">
        {['M4 12h16', 'M4 8h12v12H4zM8 8V4h12v12h-4', 'M4 4l16 16M20 4L4 20'].map((d, i) => (
          <button key={d} aria-label={['Minimize', 'Restore', 'Close'][i]} className="flex w-[70px] justify-center">
            <Svg className="size-[22px]">
              <path d={d} stroke="currentColor" strokeWidth="1.300" />
            </Svg>
          </button>
        ))}
      </div>
    </header>
  );
}

function MenuBar() {
  return (
    <nav className="flex h-[31px] shrink-0 items-center bg-white pl-2 text-lg">
      <svg viewBox="0 0 22 18" className="mr-2 h-[18px] w-[22px] shrink-0" aria-hidden="true">
        <rect x=".5" y=".5" width="21" height="17" fill="#f3f5f8" stroke="#7b8494" />
        <rect x="3" y="3" width="9" height="12" fill="#3f9e86" />
        <rect x="14" y="3" width="5" height="12" fill="#c4d3e2" />
      </svg>
      <div className="flex flex-1 gap-4">
        {menus.map((m) => (
          <button key={m}>{m}</button>
        ))}
      </div>
      <div className="flex gap-0.5">
        {['M6 17h10', 'M5 11h9v8H5zM9 11V6h9v8h-4M9 8h9', 'M7 7l10 11M17 7L7 18'].map((d, i) => (
          <button
            key={d}
            aria-label={['Minimize document', 'Restore document', 'Close document'][i]}
            className="flex h-7 w-7 items-center justify-center border border-[#e6e6e6]"
          >
            <Svg className="size-4">
              <path d={d} stroke="#55585e" strokeWidth={i === 1 ? 1.6 : 3} />
            </Svg>
          </button>
        ))}
      </div>
    </nav>
  );
}

function TabBar() {
  return (
    <div className="flex h-[31px] shrink-0 items-start bg-[#eeeeec] text-[17px] text-[#3f4347]">
      {tabs.map((t) => (
        <button
          key={t}
          className={clsx(
            'relative -mt-px flex h-[29px] items-center border px-[15px]',
            t === 'Draw' ? 'border-[#c6cad6] border-t-[#eeeef0] bg-[#f0f0f1] text-[#1d5c93]' : 'border-transparent',
          )}
        >
          {t}
        </button>
      ))}
      <div className="ml-auto flex h-7 items-center gap-2 pr-[3px]">
        <button
          aria-label="Help"
          className="flex size-5 items-center justify-center rounded-full bg-[#3d74ad] text-base font-bold text-white"
        >
          ?
        </button>
        <Svg>
          <rect width="24" height="24" rx="3" fill="#fcc81c" />
          <path d="M1 24L9 0h6l8 24h-6L12 8 7 24z" fill="#16130a" />
        </Svg>
      </div>
    </div>
  );
}

function Taskbar() {
  const running = 'border-b-[3px] border-[#76aed6]';
  const item = 'flex w-[61px] items-center justify-center';
  return (
    <div className="flex h-[49px] gap-3.5 bg-[#2b2c2d] pl-2">
      <button aria-label="Start" className={clsx(item, 'border-b-[3px] border-transparent pr-1')}>
        <Svg className="size-6">
          <path d="M0 4l10-1.500V11H0zM11.500 2L24 0v11H11.500zM0 12.500h10V21L0 19.500zM11.500 12.500H24V24l-12.500-2z" fill="#fff" />
        </Svg>
      </button>
      <button aria-label="Edge" className={clsx(item, running)}>
        <Svg className="size-9">
          <path d="M1 12C2 4 8 1 12 1c8 0 12 6 11 10-1 5-8 5-9 3 1-2 1-5-3-6C7 7 2 9 1 12z" fill="#3fc6b4" />
          <path d="M14 1c8 2 10 7 9 10-1 5-8 5-9 3 2-4 0-7-4-8z" fill="#57d873" />
          <path d="M1 12c1-6 9-6 11-3-4 2-3 9 3 10 3 1 6-1 7-1-3 5-8 6-11 5C5 22 1 18 1 12z" fill="#1573c6" />
          <path d="M1 12c1-5 8-6 10-4-5 3-5 12 2 15C5 23 1 18 1 12z" fill="#2491e0" />
        </Svg>
      </button>
      <button aria-label="File Explorer" className={clsx(item, running)}>
        <Svg className="size-8">
          <path d="M0 2h10l2 2h12v18H0z" fill="#f8d35e" />
          <path d="M0 2h10l2 2-2 2H0z" fill="#d99f1e" />
          <path d="M4 23v-10h16v10h-5v-6H9v6z" fill="#3f94d2" />
        </Svg>
      </button>
      <button aria-label="MATLAB" className={clsx(item, running)}>
        <Svg className="size-9">
          <path d="M1 14l7-4 4-2-3 8-4 2z" fill="#4f94c8" />
          <path d="M9 12q4-2 7-11l-5 17-4-1z" fill="#7f3a1c" />
          <path d="M16 1q4 6 7 17l-4-1-5 6-4-6q4-6 6-16z" fill="#e0561c" />
          <path d="M16 1q-1 12-5 17l3 5q3-10 2-22z" fill="#f5b04a" />
        </Svg>
      </button>
      <button aria-label="PowerPoint" className={clsx(item, running)}>
        <svg viewBox="0 0 24 24" className="size-9" aria-hidden="true">
          <circle cx="14" cy="12" r="10" fill="#d6513a" />
          <path d="M14 2a10 10 0 0110 10H14z" fill="#f58b72" />
          <rect x="1" y="6.500" width="11" height="11" rx="1" fill="#b9301c" />
          <text x="6.500" y="15" textAnchor="middle" fontSize="8.500" fontWeight="700" fill="#fff" fontFamily="Open Sans, sans-serif">
            P
          </text>
        </svg>
      </button>
    </div>
  );
}

export default function App() {
  return (
    <div className="flex h-screen flex-col overflow-hidden bg-[#eeeeec] font-['Open_Sans',sans-serif] text-[#1a1a1a]">
      <TitleBar />
      <MenuBar />
      <Ribbon />
      <TabBar />

      <main className="flex min-h-0 flex-1">
        <aside className="flex w-[412px] shrink-0 flex-col">
          <PanelHeader title="Project Manager" />
          <div className="min-h-0 flex-1 bg-white text-black">
            <Tree rows={projectRows} h={24} className="h-6 text-[15px]" />
          </div>
          <div className={clsx('h-1.5 shrink-0', hatch)} />
          <PanelHeader title="Properties" />
          <div className="h-[352px] shrink-0 px-2 pt-2 pb-[26px]">
            <div className="flex h-full border-2 border-t-[#6b6b6b] border-r-white border-b-white border-l-[#6b6b6b]">
              <div className="flex-1" />
              <div className="flex w-[26px] flex-col border-l-2 border-white">
                <Chevron dir="up" />
                <div className="flex-1">
                  <div className="h-[90%] bg-[#c9c9c8]" />
                </div>
                <Chevron dir="down" />
              </div>
            </div>
          </div>
        </aside>
        <div className={clsx('w-2 shrink-0', hatch)} />

        <section className="flex w-[315px] shrink-0 flex-col border-t-2 border-[#6b6b6b]">
          <div className="flex min-h-0 flex-1">
            <div className="flex-1 overflow-hidden bg-white text-black">
              <Tree rows={modelRows} h={26} className="h-[26px] text-lg" />
            </div>
            <div className="mr-[5px] flex w-6 shrink-0 flex-col">
              <Chevron dir="up" />
              <div className="flex flex-1 flex-col pt-11">
                <div className="h-[62%] bg-[#c9c9c8]" />
              </div>
              <Chevron dir="down" />
            </div>
          </div>
          <div className="flex h-[27px] shrink-0 pr-8 pb-0.5">
            <Chevron dir="left" className="h-full" />
            <div className="flex-1 pl-0.5">
              <div className="h-full w-[83%] bg-[#c9c9c8]" />
            </div>
            <Chevron dir="right" className="h-full" />
          </div>
        </section>

        <section className="min-w-0 flex-1 overflow-hidden border-t-2 border-b-[3px] border-l-2 border-[#6b6b6b] border-b-[#f4f4f4]">
          <Viewport />
        </section>
      </main>

      <div className="flex h-[33px] shrink-0 items-center justify-end gap-[5px] bg-[#cdd2da] pt-0.5 pr-0.5 font-['Liberation_Mono',monospace] text-[15px]">
        <button className="flex h-[29px] items-center gap-3 border border-[#a8acb2] bg-[#dedfdf] pr-[11px] pl-1.5">
          <Svg className="size-3">
            <path d="M1 5h6l3-3h12v20H1z" fill="#f5ec8e" stroke="#7a6b1b" strokeWidth="2" />
            <rect x="9" y="9" width="5" height="8" stroke="#8a6d10" strokeWidth="2" />
          </Svg>
          Show 0 Messages
        </button>
        <button className="flex h-[29px] items-center gap-3 border border-[#a8acb2] bg-[#dedfdf] pr-[11px] pl-1.5">
          <Svg className="size-3">
            <path d="M2 6h20v6H2z" fill="#63d66b" />
            <path d="M2 18V6h20" stroke="#226b2a" strokeWidth="2" />
          </Svg>
          Show Progress
        </button>
      </div>

      <footer className="flex h-[60px] shrink-0">
        <div className="w-[369px] shrink-0 pt-[11px]">
          <Taskbar />
        </div>
        <div className="min-w-0 flex-1 border-b border-l border-[#3a3b3c] border-l-[#9a9a9a] pr-[209px] pl-[38px]">
          <div className="flex h-5 justify-between overflow-hidden border-x border-b border-[#8a8a8a] bg-white">
            <table className="-mt-4 h-[50px] table-fixed border-collapse font-['Liberation_Sans',sans-serif] text-[15px] leading-[15px]">
              <tbody>
                {results.map((row, i) => (
                  <tr key={row[0]} className={clsx('h-[25px]', i === 0 && 'bg-[#f2f2f2]')}>
                    {row.map((cell, j) =>
                      j === 0 ? (
                        <th key={j} scope="row" className="w-9 border-r border-b border-[#8a8a8a] bg-[#eeeeec] p-0 font-normal">
                          {cell}
                        </th>
                      ) : (
                        <td key={j} className="w-[75px] border-r border-[#f0f0f0] p-0 pr-1 text-right">
                          {cell}
                        </td>
                      ),
                    )}
                  </tr>
                ))}
              </tbody>
            </table>
            <Chevron dir="down" className="h-4 bg-[#eeeeec]" />
          </div>
        </div>
        <div className="flex w-14 shrink-0 items-center bg-[#252627]">
          <Svg className="size-[26px]">
            <path d="M0 1h17v18h-6l-5 5v-5H0z" fill="#fff" />
            <path d="M0 6h12M0 10h12M0 14h9" stroke="#252627" strokeWidth="1.500" />
            <path d="M14 12q5 6-4 10 8 1 9-6z" fill="#fff" stroke="#252627" />
          </Svg>
          <span className="mr-1.5 ml-auto h-full w-px bg-[#77797a]" />
        </div>
      </footer>
    </div>
  );
}
